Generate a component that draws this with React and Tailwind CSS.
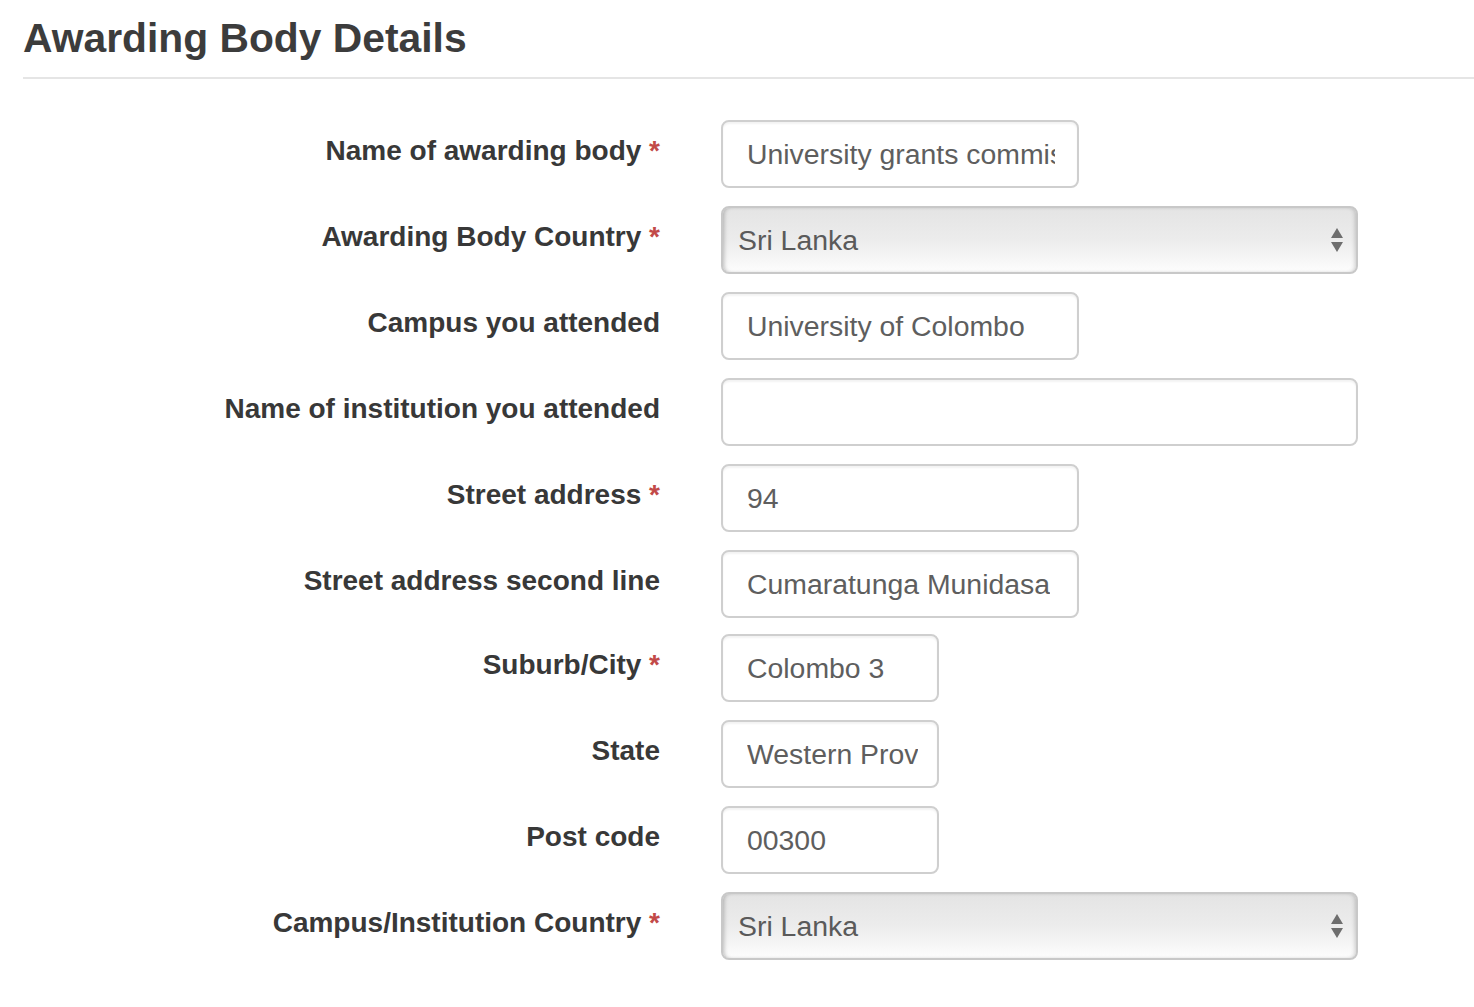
import React from "react";

const font = { fontFamily: '"Liberation Sans", Arial, sans-serif' };

function Label({ text, required }) {
  return (
    <div className="w-[660px] shrink-0 text-right pt-[11px] text-[28px] leading-[40px] font-bold text-[#383838]">
      {text}
      {required && <span className="text-[#c24a48]"> *</span>}
    </div>
  );
}

function TextInput({ value, width, pr = "pr-[12px]" }) {
  return (
    <div
      className={`${width} ${pr} h-[68px] rounded-[8px] border-2 border-[#cfcfcf] bg-white pl-[24px] flex items-center whitespace-nowrap text-[28.4px] text-[#5e5e5e] shadow-[inset_0_2px_2px_rgba(0,0,0,0.05)]`}
    >
      <span className="block min-w-0 overflow-hidden pt-[1px]">{value}</span>
    </div>
  );
}

function SelectBox({ value }) {
  return (
    <div className="relative w-[637px] h-[68px] rounded-[8px] border-2 border-[#c8c8c8] bg-gradient-to-b from-[#e4e4e4] via-[#ececec] to-[#fdfdfd] pl-[15px] flex items-center text-[28.4px] text-[#5a5a5a] shadow-[inset_3px_0_4px_-2px_rgba(0,0,0,0.25),inset_-3px_0_4px_-2px_rgba(0,0,0,0.18)]">
      <span className="pt-[1px]">{value}</span>
      <svg
        className="absolute right-[12px] top-1/2 -translate-y-1/2"
        width="14"
        height="28"
        viewBox="0 0 14 28"
      >
        <path d="M7 2 L13 12 L1 12 Z" fill="#6e6e6e" />
        <path d="M1 16 L13 16 L7 26 Z" fill="#6e6e6e" />
      </svg>
    </div>
  );
}

function Row({ label, required, children, mb = "mb-[18px]" }) {
  return (
    <div className={`flex gap-[61px] ${mb}`}>
      <Label text={label} required={required} />
      {children}
    </div>
  );
}

export default function App() {
  return (
    <div className="bg-white min-h-[1007px] w-[1474px] overflow-hidden" style={font}>
      <div className="pl-[23px]">
        <h1 className="pt-[12px] text-[40.8px] leading-[52px] font-bold text-[#3c3c3c]">
          Awarding Body Details
        </h1>
        <div className="mt-[13px] h-[2px] bg-[#e5e5e5]" />
      </div>
      <form className="pt-[41px]">
        <Row label="Name of awarding body" required>
          <TextInput value="University grants commission" width="w-[358px]" pr="pr-[22px]" />
        </Row>
        <Row label="Awarding Body Country" required>
          <SelectBox value="Sri Lanka" />
        </Row>
        <Row label="Campus you attended">
          <TextInput value="University of Colombo" width="w-[358px]" />
        </Row>
        <Row label="Name of institution you attended">
          <TextInput value="" width="w-[637px]" />
        </Row>
        <Row label="Street address" required>
          <TextInput value="94" width="w-[358px]" />
        </Row>
        <Row label="Street address second line" mb="mb-[16px]">
          <TextInput value="Cumaratunga Munidasa" width="w-[358px]" />
        </Row>
        <Row label="Suburb/City" required>
          <TextInput value="Colombo 3" width="w-[218px]" />
        </Row>
        <Row label="State">
          <TextInput value="Western Prov" width="w-[218px]" />
        </Row>
        <Row label="Post code">
          <TextInput value="00300" width="w-[218px]" />
        </Row>
        <Row label="Campus/Institution Country" required>
          <SelectBox value="Sri Lanka" />
        </Row>
      </form>
    </div>
  );
}
